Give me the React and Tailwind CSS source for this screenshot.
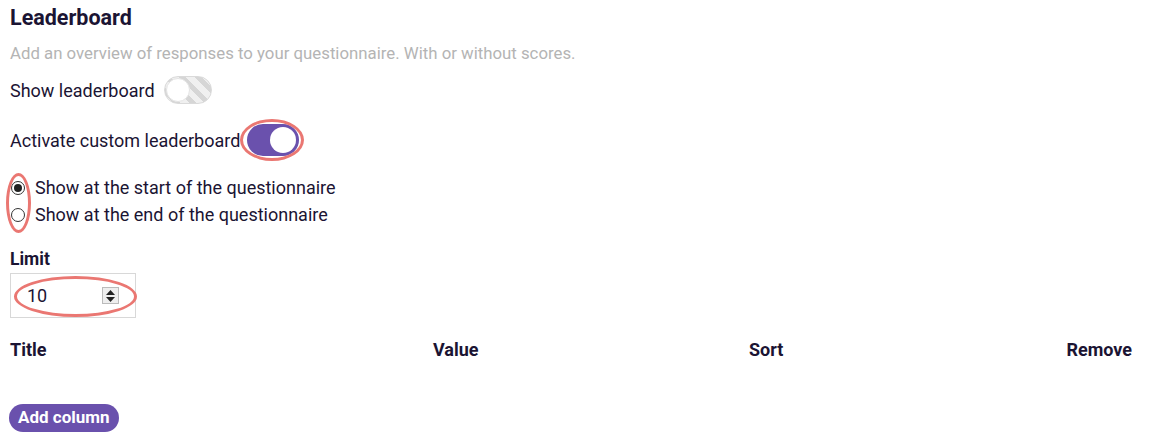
import React from "react";

function Radio({ checked }) {
  return (
    <span className="relative inline-flex h-[14px] w-[14px] shrink-0 items-center justify-center rounded-full border border-[#333] bg-white">
      {checked && <span className="h-[8px] w-[8px] rounded-full bg-[#222]" />}
    </span>
  );
}

export default function App() {
  return (
    <div className="min-h-[437px] w-[1162px] bg-white px-[10px] pt-[4px] text-[#1b1433]" style={{ fontFamily: "Roboto, 'Liberation Sans', sans-serif" }}>
      <h2 className="text-[21.5px] font-bold leading-[28px]">Leaderboard</h2>
      <p className="mt-[9px] text-[16.8px] leading-[24px] text-[#b4b4b4]">
        Add an overview of responses to your questionnaire. With or without scores.
      </p>

      <div className="mt-[11px] flex h-[28px] items-center gap-[9px]">
        <span className="text-[18px]">Show leaderboard</span>
        <span
          className="relative h-[28px] w-[48px] rounded-full border border-[#dadada]"
          style={{
            background:
              "repeating-linear-gradient(45deg, #f0f0f0 0px, #f0f0f0 6px, #d6d6d6 6px, #d6d6d6 11px)",
          }}
        >
          <span className="absolute left-[1px] top-[1px] h-[24px] w-[24px] rounded-full border border-[#e4e4e4] bg-white" />
        </span>
      </div>

      <div className="mt-[20px] flex h-[32px] items-center gap-[7px]">
        <span className="text-[18px]">Activate custom leaderboard</span>
        <span className="relative">
          <span className="relative block h-[32px] w-[52px] rounded-full bg-[#6a51ad]">
            <span className="absolute right-[3px] top-[3px] h-[26px] w-[26px] rounded-full bg-white" />
          </span>
          <span className="pointer-events-none absolute -left-[7px] -top-[5px] h-[42px] w-[64px] rounded-[50%] border-[3px] border-[#ea7772]" />
        </span>
      </div>

      <div className="relative mt-[18px] flex flex-col">
        <label className="flex h-[27px] items-center gap-[10px] pl-[1px] text-[18px]">
          <Radio checked />
          <span>Show at the start of the questionnaire</span>
        </label>
        <label className="flex h-[27px] items-center gap-[10px] pl-[1px] text-[18px]">
          <Radio />
          <span>Show at the end of the questionnaire</span>
        </label>
        <span className="pointer-events-none absolute -left-[4px] -top-[1px] h-[60px] w-[25px] rounded-[50%] border-[3px] border-[#ea7772]" />
      </div>

      <div className="mt-[20px] text-[17.5px] font-bold leading-[22px]">Limit</div>
      <div className="relative mt-[3px] flex h-[45px] w-[126px] items-center border border-[#d8d8d8] pl-[16px] pr-[16px]">
        <span className="flex-1 text-[18px]">10</span>
        <span className="flex h-[17px] w-[17px] flex-col items-center justify-center gap-[2px] border border-[#bbb] bg-[#eee]">
          <svg width="9" height="5" viewBox="0 0 9 5"><path d="M4.5 0L9 5H0z" fill="#222" /></svg>
          <svg width="9" height="5" viewBox="0 0 9 5"><path d="M0 0h9L4.5 5z" fill="#222" /></svg>
        </span>
        <span className="pointer-events-none absolute left-[3px] top-[2px] h-[41px] w-[123px] rounded-[50%] border-[3px] border-[#ea7772]" />
      </div>

      <div className="mt-[20px] grid grid-cols-[423px_316px_1fr_auto] text-[18px] font-bold leading-[24px]">
        <span>Title</span>
        <span>Value</span>
        <span>Sort</span>
        <span className="pr-[20px]">Remove</span>
      </div>

      <button className="-ml-[1px] mt-[42px] h-[28px] rounded-full bg-[#6a51ad] px-[9px] text-[17px] font-bold text-white">
        Add column
      </button>
    </div>
  );
}
